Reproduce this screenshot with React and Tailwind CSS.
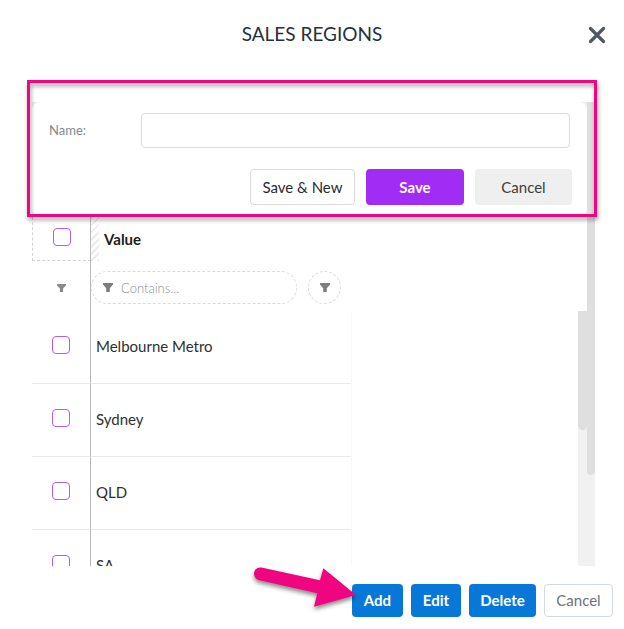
const regions = ["Melbourne Metro", "Sydney", "QLD", "SA"];

function Checkbox({ label }) {
  return (
    <input
      type="checkbox"
      aria-label={label}
      className="block mx-auto w-[18px] h-[18px] appearance-none rounded-[4px] border border-[#b05cf6] bg-white checked:bg-[#a12df5]"
    />
  );
}

function FilterIcon({ className }) {
  return (
    <svg viewBox="0 0 10 9" className={className} fill="currentColor" aria-hidden="true">
      <path d="M0 0h10v1.6L6.8 5.2V9H3.2V5.2L0 1.6z" />
    </svg>
  );
}

function NameForm() {
  return (
    <div className="relative z-10 bg-[#ececec]">
      <form className="h-[115px] rounded-lg bg-white" onSubmit={(e) => e.preventDefault()}>
        <div className="flex items-center pt-[11px] px-[17px]">
          <label htmlFor="region-name" className="w-[92px] shrink-0 text-[13px] text-[#84888c]">
            Name:
          </label>
          <input
            id="region-name"
            type="text"
            className="h-[35px] min-w-0 flex-1 rounded-[4px] border border-[#dcdcdc] bg-white px-3 text-base outline-none"
          />
        </div>
        <div className="mt-[21px] flex justify-end gap-[11px] pr-[15px] text-[15px]">
          <button type="button" className="h-[36px] w-[105px] rounded-[4px] border border-[#dcdcdc] bg-white text-[#2b2b2b]">
            Save &amp; New
          </button>
          <button type="submit" className="h-[36px] w-[98px] rounded-[4px] bg-[#a12df5] font-bold text-white">
            Save
          </button>
          <button type="button" className="h-[36px] w-[97px] rounded-[4px] bg-[#efefef] text-[#3d3d3d]">
            Cancel
          </button>
        </div>
      </form>

      {/* Highlight frame */}
      <div className="pointer-events-none absolute -top-[22px] -left-[5px] -right-[10px] bottom-0 border-3 border-[#f0047f] drop-shadow-[1px_3px_2px_rgba(0,0,0,0.4)]" />
    </div>
  );
}

function RegionTable() {
  return (
    <table className="w-[319px] shrink-0 table-fixed border-separate border-spacing-0 self-start text-left">
      <colgroup>
        <col className="w-[59px]" />
        <col />
      </colgroup>
      <thead>
        <tr className="h-[44px]">
          <th className="border-b border-l border-dashed border-b-[#d4d4d4] border-l-[#d4d4d4] border-r border-r-[#b9b9b9] [border-right-style:solid] p-0 pb-[3px]">
            <Checkbox label="Select all" />
          </th>
          <th className="p-0">
            <div className="flex h-[44px] items-center gap-[5px]">
              <span className="h-full w-2 bg-[repeating-linear-gradient(135deg,#ececec_0_2px,#ffffff_2px_5px)]" />
              <span className="text-[15px] font-bold text-[#1d1d1d]">Value</span>
            </div>
          </th>
        </tr>
        <tr className="h-[50px]">
          <td className="border-r border-[#b9b9b9] p-0 pt-[3px]">
            <FilterIcon className="mx-auto h-2 w-[9px] text-[#8a8a8a]" />
          </td>
          <td className="p-0 pt-[3px]">
            <div className="flex items-center gap-[11px] pr-[10px]">
              <label className="flex h-[33px] min-w-0 flex-1 items-center gap-2 rounded-full border border-dashed border-[#dadada] pl-[11px]">
                <FilterIcon className="h-[9px] w-[10px] shrink-0 text-[#7d7d7d]" />
                <input
                  type="text"
                  aria-label="Filter value"
                  placeholder="Contains..."
                  className="w-full min-w-0 bg-transparent pt-[3px] text-[13px] font-light text-[#555] outline-none placeholder:text-[#8c8c8c]"
                />
              </label>
              <button
                type="button"
                aria-label="Filter options"
                className="flex h-[33px] w-[33px] shrink-0 items-center justify-center rounded-full border border-dashed border-[#dadada] text-[#7d7d7d]"
              >
                <FilterIcon className="h-[9px] w-[10px]" />
              </button>
            </div>
          </td>
        </tr>
      </thead>
      <tbody>
        {regions.map((region) => (
          <tr key={region} className="h-[73px]">
            <td className="border-r border-b border-r-[#b9b9b9] border-b-[#e8e8e8] p-0 pb-1">
              <Checkbox label={region} />
            </td>
            <td className="border-b border-[#e8e8e8] p-0 pb-[2px] pl-[5px] text-[15px] text-[#2f2f2f]">{region}</td>
          </tr>
        ))}
      </tbody>
    </table>
  );
}

function PointerArrow() {
  return (
    <svg
      viewBox="0 0 106 44"
      className="pointer-events-none absolute -left-[100px] -top-[18px] h-[44px] w-[106px] overflow-visible drop-shadow-[0px_3px_2px_rgba(0,0,0,0.45)]"
      fill="#f0047f"
      aria-hidden="true"
    >
      <path d="M9.5 1.6 68 14.3 71.3 2.3 104 29 62 40.7 65.3 27.3 6.5 14C-1 11 1.500 0.200 9.500 1.600Z" />
    </svg>
  );
}

export default function App() {
  return (
    <div className="bg-white pb-3 font-['Lato',sans-serif]">
      <header className="mb-[33px] grid h-[69px] grid-cols-[1fr_auto_1fr] items-center px-[18px]">
        <h1 className="col-start-2 text-[19px] text-[#27303c]">SALES REGIONS</h1>
        <button type="button" aria-label="Close" className="justify-self-end">
          <svg viewBox="0 0 18 18" className="h-[18px] w-[18px]" fill="none" stroke="#505862" strokeWidth="3.2" strokeLinecap="round">
            <path d="M2.500 2.500 15.500 15.500M15.500 2.500 2.500 15.500" />
          </svg>
        </button>
      </header>

      <main className="mr-[29px] ml-8 flex">
        <div className="min-w-0 flex-1">
          <NameForm />
          <div className="flex h-[349px] overflow-hidden">
            <RegionTable />
            <div className="mt-[94px] flex-1 border-l border-[#f8f8f8]" />
            <div className="mt-[94px] w-[9px] bg-[#f1f1f1]">
              <div className="h-[119px] rounded-b-full bg-[#dfdfdf]" />
            </div>
          </div>
        </div>
        <div className="w-2 bg-[#f1f1f1]">
          <div className="h-[373px] rounded-b-full bg-[#dfdfdf]" />
        </div>
      </main>

      <footer className="mt-[18px] flex justify-end gap-2 pr-[11px] text-[15px]">
        <div className="relative">
          <button type="button" className="h-[33px] w-[51px] rounded-[4px] bg-[#0878d8] font-bold text-white">
            Add
          </button>
          <PointerArrow />
        </div>
        <button type="button" className="h-[33px] w-[50px] rounded-[4px] bg-[#0878d8] font-bold text-white">
          Edit
        </button>
        <button type="button" className="h-[33px] w-[67px] rounded-[4px] bg-[#0878d8] font-bold text-white">
          Delete
        </button>
        <button type="button" className="h-[33px] w-[69px] rounded-[4px] border border-[#d3dae4] bg-white text-[#6c737b]">
          Cancel
        </button>
      </footer>
    </div>
  );
}
